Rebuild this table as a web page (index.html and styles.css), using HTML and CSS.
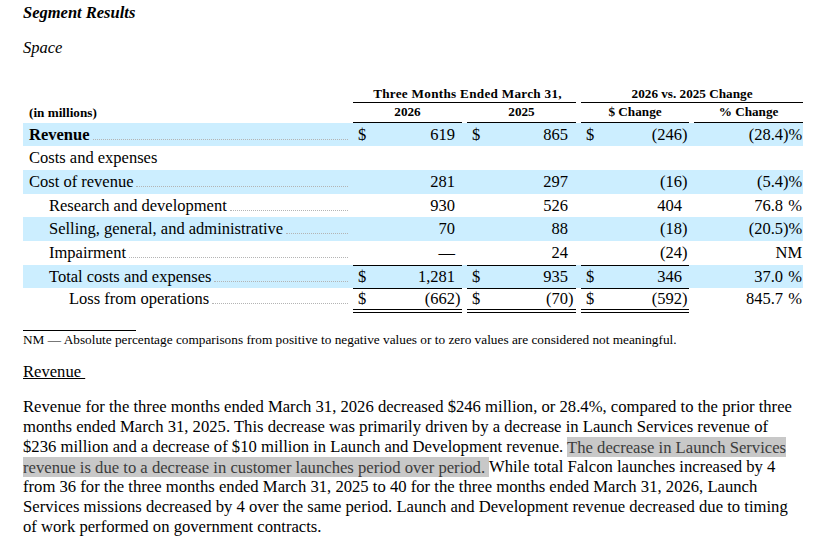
FILE: index.html
```html
<!DOCTYPE html>
<html lang="en">
<head>
	<meta charset="UTF-8">
	<title>Segment Results</title>
	<link rel="stylesheet" href="styles.css">
</head>
<body>
	<main class="page">
		<p class="title">Segment Results</p>
		<p class="sub">Space</p>

		<table class="seg">
			<colgroup>
				<col class="c-label">
				<col class="c-cur"><col class="c-num"><col class="c-par">
				<col class="c-gap">
				<col class="c-cur"><col class="c-num2"><col class="c-par2">
				<col class="c-gap">
				<col class="c-cur"><col class="c-num2"><col class="c-par">
				<col class="c-gap">
				<col class="c-pct"><col class="c-sfx">
			</colgroup>
			<thead>
				<tr class="h1">
					<th></th>
					<th colspan="7" class="ul wide">Three Months Ended March 31,</th>
					<th></th>
					<th colspan="6" class="ul">2026 vs. 2025 Change</th>
				</tr>
				<tr class="h2">
					<th class="lbl">(in millions)</th>
					<th colspan="3" class="ul">2026</th>
					<th></th>
					<th colspan="3" class="ul">2025</th>
					<th></th>
					<th colspan="3" class="ul">$ Change</th>
					<th></th>
					<th colspan="2" class="ul">% Change</th>
				</tr>
			</thead>
			<tbody>
				<tr class="band">
					<td class="lbl"><div class="lead"><b>Revenue</b><span class="dots"></span></div></td>
					<td class="cur">$</td><td class="num">619</td><td></td><td></td>
					<td class="cur">$</td><td class="num">865</td><td></td><td></td>
					<td class="cur">$</td><td class="num">(246</td><td class="par">)</td><td></td>
					<td class="num">(28.4</td><td class="sfx">)%</td>
				</tr>
				<tr>
					<td class="lbl">Costs and expenses</td>
					<td></td><td></td><td></td><td></td>
					<td></td><td></td><td></td><td></td>
					<td></td><td></td><td></td><td></td>
					<td></td><td></td>
				</tr>
				<tr class="band">
					<td class="lbl"><div class="lead">Cost of revenue<span class="dots"></span></div></td>
					<td></td><td class="num">281</td><td></td><td></td>
					<td></td><td class="num">297</td><td></td><td></td>
					<td></td><td class="num">(16</td><td class="par">)</td><td></td>
					<td class="num">(5.4</td><td class="sfx">)%</td>
				</tr>
				<tr>
					<td class="lbl in1"><div class="lead">Research and development<span class="dots"></span></div></td>
					<td></td><td class="num">930</td><td></td><td></td>
					<td></td><td class="num">526</td><td></td><td></td>
					<td></td><td class="num">404</td><td></td><td></td>
					<td class="num">76.8</td><td class="sfx">%</td>
				</tr>
				<tr class="band">
					<td class="lbl in1"><div class="lead">Selling, general, and administrative<span class="dots"></span></div></td>
					<td></td><td class="num">70</td><td></td><td></td>
					<td></td><td class="num">88</td><td></td><td></td>
					<td></td><td class="num">(18</td><td class="par">)</td><td></td>
					<td class="num">(20.5</td><td class="sfx">)%</td>
				</tr>
				<tr>
					<td class="lbl in1"><div class="lead">Impairment<span class="dots"></span></div></td>
					<td></td><td class="num">&mdash;</td><td></td><td></td>
					<td></td><td class="num">24</td><td></td><td></td>
					<td></td><td class="num">(24</td><td class="par">)</td><td></td>
					<td colspan="2" class="num nm">NM</td>
				</tr>
				<tr class="band">
					<td class="lbl in1"><div class="lead">Total costs and expenses<span class="dots"></span></div></td>
					<td class="cur rt">$</td><td class="num rt">1,281</td><td class="rt"></td><td></td>
					<td class="cur rt">$</td><td class="num rt">935</td><td class="rt"></td><td></td>
					<td class="cur rt">$</td><td class="num rt">346</td><td class="rt"></td><td></td>
					<td class="num">37.0</td><td class="sfx">%</td>
				</tr>
				<tr class="last">
					<td class="lbl in2"><div class="lead">Loss from operations<span class="dots"></span></div></td>
					<td class="cur rt dbl">$</td><td class="num rt dbl">(662</td><td class="par rt dbl">)</td><td></td>
					<td class="cur rt dbl">$</td><td class="num rt dbl">(70</td><td class="par rt dbl">)</td><td></td>
					<td class="cur rt dbl">$</td><td class="num rt dbl">(592</td><td class="par rt dbl">)</td><td></td>
					<td class="num">845.7</td><td class="sfx">%</td>
				</tr>
			</tbody>
		</table>

		<div class="note-rule"></div>
		<p class="note">NM &mdash; Absolute percentage comparisons from positive to negative values or to zero values are considered not meaningful.</p>

		<p class="head"><u>Revenue&nbsp;</u></p>
		<p class="body">Revenue for the three months ended March 31, 2026 decreased $246 million, or 28.4%, compared to the prior three months ended March 31, 2025. This decrease was primarily driven by a decrease in Launch Services revenue of $236 million and a decrease of $10 million in Launch and Development revenue. <span class="hl">The decrease in Launch Services revenue is due to a decrease in customer launches period over period. </span>While total Falcon launches increased by 4 from 36 for the three months ended March 31, 2025 to 40 for the three months ended March 31, 2026, Launch Services missions decreased by 4 over the same period. Launch and Development revenue decreased due to timing of work performed on government contracts.</p>
	</main>
</body>
</html>
```

FILE: styles.css
```css
/* page */
body {
	background: #fff;
	color: #000;
	font-family: "Liberation Serif", "Times New Roman", serif;
	margin: 0px;
}
main.page {
	padding: 3px 0px 0px 23px;
	width: 780px;
}
main.page p {
	margin: 0px;
}
p.title {
	font-size: 16.5px;
	font-style: italic;
	font-weight: bold;
	line-height: 20px;
}
p.sub {
	font-size: 16.5px;
	font-style: italic;
	line-height: 20px;
	margin-top: 15px !important;
}

/* table */
table.seg {
	border-collapse: separate;
	border-spacing: 0px;
	margin-top: 28px;
	table-layout: fixed;
	width: 780px;
}
col.c-label { width: 330px; }
col.c-cur   { width: 20px;  }
col.c-num   { width: 82px;  }
col.c-num2  { width: 81px;  }
col.c-par   { width: 7px;   }
col.c-par2  { width: 8px;   }
col.c-gap   { width: 5px;   }
col.c-pct   { width: 89px;  }
col.c-sfx   { width: 20px;  }

table.seg th {
	font-size: 13.2px;
	font-weight: bold;
	line-height: 15px;
	padding: 0px;
	text-align: center;
	vertical-align: bottom;
	white-space: nowrap;
}
table.seg tr.h1 th { padding-bottom: 0.5px; }
table.seg tr.h2 th { padding: 1.5px 0px 2.5px; }
table.seg th.ul { border-bottom: 1px solid #000; }
table.seg tr.h1 th.wide {
	letter-spacing: 0.28px;
	padding-left: 6px;
}
table.seg tr.h2 th.lbl {
	padding-left: 6px;
	text-align: left;
}

table.seg td {
	font-size: 16.5px;
	line-height: 23.7px;
	padding: 0px;
	vertical-align: top;
	white-space: nowrap;
}
table.seg tr.band td { background: #cceeff; }
table.seg tr.last td { line-height: 21px; }

table.seg td.lbl { padding: 0px 5px 0px 6px; }
table.seg td.in1 { padding-left: 26px; }
table.seg td.in2 { padding-left: 46px; }
table.seg td.cur { padding-left: 5px; }
table.seg td.num { text-align: right; }
table.seg td.par { text-align: left; }
table.seg td.sfx {
	padding-right: 1px;
	text-align: right;
}
table.seg td.nm { padding-right: 1px; }
table.seg td.rt  { box-shadow: inset 0px 1px 0px #000; }
table.seg td.dbl { border-bottom: 4px double #000; }

div.lead {
	align-items: baseline;
	display: flex;
}
div.lead span.dots {
	border-bottom: 1px dotted #b4b4b4;
	flex: 1;
	margin-left: 3px;
}

/* notes */
div.note-rule {
	border-top: 1px solid #000;
	margin-top: 17px;
	width: 113px;
}
p.note {
	font-size: 13.3px;
	line-height: 15px;
	margin-top: 1px !important;
}
p.head {
	font-size: 16.6px;
	line-height: 20px;
	margin-top: 15px !important;
}
p.body {
	font-size: 16.65px;
	line-height: 20px;
	margin-top: 15px !important;
}
span.hl {
	background: #c8c8c8;
	color: #3c3c3c;
	padding: 0.7px 0px;
}
```
